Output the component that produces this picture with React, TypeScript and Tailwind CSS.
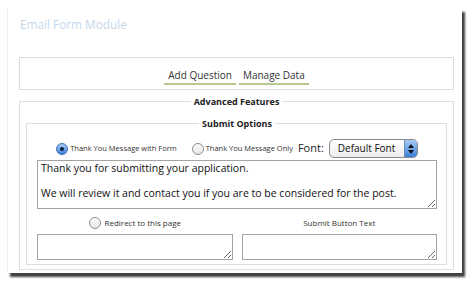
import React from 'react'

function Radio({ checked }: { checked?: boolean }) {
  if (checked) {
    return (
      <span className="inline-flex items-center justify-center w-[12px] h-[12px] rounded-full border border-[#3f6fae] bg-gradient-to-b from-[#a9cdf5] to-[#3a7fd8] shrink-0">
        <span className="w-[4px] h-[4px] rounded-full bg-[#10203f]" />
      </span>
    )
  }
  return (
    <span className="inline-block w-[12px] h-[12px] rounded-full border border-[#8f8f8f] bg-gradient-to-b from-[#fdfdfd] to-[#e6e6e6] shrink-0" />
  )
}

const sans = "font-['Open_Sans',sans-serif]"

export default function App() {
  return (
    <div className={`w-[474px] h-[287px] bg-white pt-[8px] pl-[7px] ${sans}`}>
      <div className="w-[455px] h-[265px] border-l border-[#ececec] bg-white shadow-[3px_4px_2px_rgba(0,0,0,0.75)] pl-[11px] pr-[8px] pt-[7px]">
        <div className="text-[11.8px] leading-[18px] text-[#c6d7e8] pl-[1px]">Email Form Module</div>

        {/* tabs */}
        <div className="mt-[24px] h-[33px] border border-[#dcdcdc] flex items-end justify-center gap-[3px] pb-[4px]">
          <div className="px-[4px] pb-[1px] border-b-2 border-[#b7c98c] text-[10px] leading-[14px] text-[#333]">Add Question</div>
          <div className="px-[4px] pb-[1px] border-b-2 border-[#b7c98c] text-[10px] leading-[14px] text-[#333]">Manage Data</div>
        </div>

        {/* advanced features */}
        <fieldset className="mt-[5px] border border-[#dedede] px-[6px] pb-[4px]">
          <legend className="mx-auto px-[3px] text-[9px] leading-[13px] font-bold text-[#222]">Advanced Features</legend>
          <fieldset className="mt-[9px] border border-[#dedede] pl-[10px] pr-[9px] pb-[4px]">
            <legend className="mx-auto px-[3px] text-[9px] leading-[13px] font-bold text-[#222]">Submit Options</legend>

            <div className="mt-[9px] h-[19px] flex items-center justify-center">
              <Radio checked />
              <span className="ml-[2px] text-[7.5px] text-[#333]">Thank You Message with Form</span>
              <span className="ml-[15px]"><Radio /></span>
              <span className="ml-[2px] text-[7.5px] text-[#333]">Thank You Message Only</span>
              <span className="ml-[5px] text-[11px] text-[#222]">Font:</span>
              <div className="ml-[5px] w-[89px] h-[19px] flex rounded-[5px] border border-[#8a8a8a] bg-gradient-to-b from-white to-[#ececec] overflow-hidden">
                <span className="flex-1 pl-[8px] text-[10px] leading-[17px] text-[#111]">Default Font</span>
                <span className="w-[13px] flex flex-col items-center justify-center gap-[2px] bg-gradient-to-b from-[#a7cbf3] to-[#3a7ed7] border-l border-[#6a8fbf]">
                  <svg width="6" height="4" viewBox="0 0 6 4"><path d="M3 0L6 4H0z" fill="#111" /></svg>
                  <svg width="6" height="4" viewBox="0 0 6 4"><path d="M0 0h6L3 4z" fill="#111" /></svg>
                </span>
              </div>
            </div>

            <textarea
              className="mt-[2px] block w-full h-[49px] border border-[#a3a3a3] px-[3px] pt-[1px] text-[10.5px] leading-[12.5px] text-[#111] outline-none"
              defaultValue={'Thank you for submitting your application.\n\nWe will review it and contact you if you are to be considered for the post.'}
            />

            <div className="mt-[8px] grid grid-cols-2 gap-[9px]">
              <div>
                <div className="h-[12px] flex items-center justify-center gap-[4px]">
                  <Radio />
                  <span className="text-[8px] text-[#333]">Redirect to this page</span>
                </div>
                <textarea className="mt-[5px] block w-full h-[26px] border border-[#a3a3a3] outline-none" />
              </div>
              <div>
                <div className="h-[12px] flex items-center justify-center">
                  <span className="text-[8px] text-[#333]">Submit Button Text</span>
                </div>
                <textarea className="mt-[5px] block w-full h-[26px] border border-[#a3a3a3] outline-none" />
              </div>
            </div>
          </fieldset>
        </fieldset>
      </div>
    </div>
  )
}
